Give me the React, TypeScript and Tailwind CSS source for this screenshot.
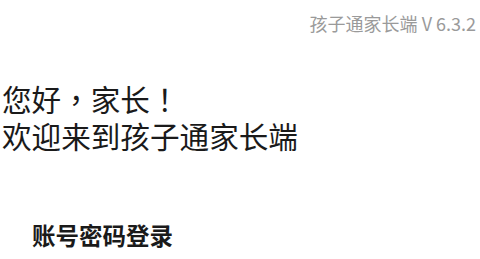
import React from "react";

export default function App() {
  return (
    <div className="w-[480px] h-[259px] bg-white overflow-hidden flex flex-col font-['Noto_Sans_CJK_SC','Noto_Sans',sans-serif]">
      {/* version */}
      <div className="flex justify-end pr-[4px] pt-[9px]">
        <span className="text-[18px] leading-[28px] text-[#9a9a9a]">孩子通家长端 V 6.3.2</span>
      </div>

      {/* greeting */}
      <div className="mt-[43px] pl-[2px] text-[29.6px] leading-[37px] text-[#1a1a1a]">
        <div>
          您好
          <span className="font-['Noto_Sans_CJK_TC','Noto_Sans_CJK_SC',sans-serif]">，</span>
          家长
          <span className="font-['Noto_Sans_CJK_TC','Noto_Sans_CJK_SC',sans-serif]">！</span>
        </div>
        <div>欢迎来到孩子通家长端</div>
      </div>

      {/* login tab */}
      <div className="mt-[66px] pl-[32px] text-[23.5px] leading-[30px] font-bold text-[#1a1a1a]">
        账号密码登录
      </div>
    </div>
  );
}
